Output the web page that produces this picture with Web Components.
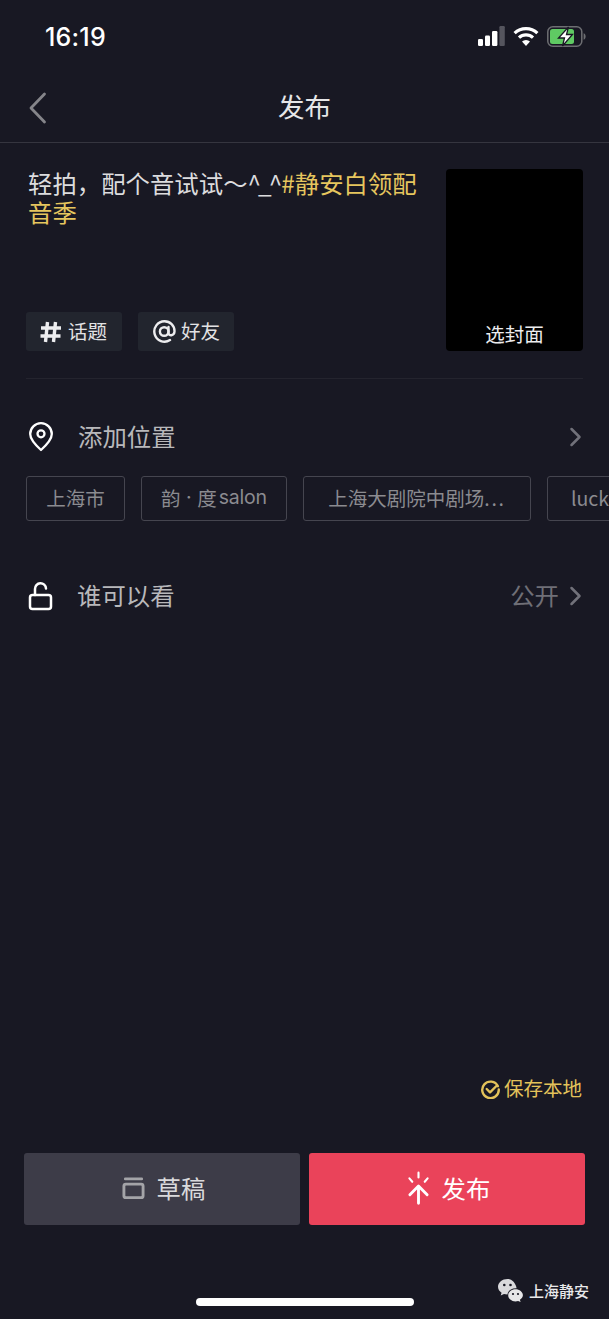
<!DOCTYPE html>
<html lang="zh-CN">
<head>
<meta charset="utf-8">
<title>发布</title>
<style>
html,body{margin:0;padding:0;background:#181823;}
body{font-family:"Noto Sans CJK SC","Noto Sans",sans-serif;color:#e0e0e2;}
</style>
</head>
<body>
<publish-screen></publish-screen>
<script>
const CJK='"Noto Sans CJK SC","Noto Sans",sans-serif';
function comp(name,css,html){
  customElements.define(name,class extends HTMLElement{
    constructor(){super();const r=this.attachShadow({mode:'open'});
      r.innerHTML=`<style>${css}</style>${html}`;}
  });
}
const chev=`<svg width="13" height="20" viewBox="0 0 13 20" fill="none" stroke="currentColor" stroke-width="2.500" stroke-linecap="round" stroke-linejoin="round"><path d="M2.500 2l8 8-8 8"/></svg>`;

comp('status-bar',`
:host{display:flex;align-items:center;justify-content:space-between;height:72px;padding:2px 23px 0 45px;box-sizing:border-box;flex:none}
.t{font:500 25px/1 Inter,sans-serif;color:#fff;letter-spacing:.2px}
.i{display:flex;align-items:center;gap:8px;position:relative;top:-1px}
svg{display:block}
`,`<span class="t">16:19</span><span class="i">
<svg width="27" height="20" viewBox="0 0 27 20"><rect x="0" y="13" width="5" height="7" rx="1.200" fill="#fff"/><rect x="7" y="9.500" width="5" height="10.500" rx="1.200" fill="#fff"/><rect x="14" y="5" width="5.400" height="15" rx="1.200" fill="#fff"/><rect x="21.400" y="0" width="5.400" height="20" rx="1.200" fill="#55555e"/></svg>
<svg width="26" height="20" viewBox="0 0 26 20" fill="none" stroke="#fff" stroke-width="3.200"><path d="M1.600 7.200a16.500 16.500 0 0 1 22.800 0"/><path d="M6 11.700a10.200 10.200 0 0 1 14 0"/><path d="M13 20l-4-4.400a5.600 5.600 0 0 1 8 0z" fill="#fff" stroke="none"/></svg>
<svg width="39" height="21" viewBox="0 0 39 21"><rect x=".8" y=".8" width="34" height="19.400" rx="5" fill="none" stroke="#6d6e72" stroke-width="1.500"/><rect x="3" y="3" width="24" height="15" rx="2.500" fill="#5fca63"/><path d="M36.600 7.200c1.500.5 2 1.800 2 3.300s-.5 2.800-2 3.300z" fill="#6d6e72"/><path d="M21.500 1L11.500 12h6l-2 8 10-11.500h-6z" fill="#fff" stroke="#181823" stroke-width="1.300"/></svg>
</span>`);

comp('nav-bar',`
:host{display:flex;align-items:center;justify-content:center;height:71px;flex:none;position:relative;box-sizing:border-box;border-bottom:1px solid #35353f;padding-bottom:1px}
button{all:unset;position:absolute;left:28px;top:20px;display:block;color:#85858a;line-height:0}
h1{margin:0;font:400 26.500px/1 ${CJK};color:#e6e6e8;position:relative}
`,`<button aria-label="返回"><svg width="19" height="32" viewBox="0 0 19 32" fill="none" stroke="currentColor" stroke-width="2.800" stroke-linecap="round" stroke-linejoin="round"><path d="M16.500 2L3 16l13.500 14"/></svg></button><h1><slot></slot></h1>`);

comp('tag-chip',`
:host{display:inline-flex;align-items:center;gap:6px;height:39px;width:96px;box-sizing:border-box;padding:0 0 2px 14px;background:#22252e;border-radius:3px;font:400 19.500px/1 ${CJK};color:#e2e2e4}
::slotted(svg){display:block;flex:none;position:relative;top:1px}
`,`<slot name="icon"></slot><slot></slot>`);

comp('cover-picker',`
:host{display:flex;align-items:flex-end;justify-content:center;width:137px;height:182px;flex:none;background:#000;border-radius:4px;box-sizing:border-box;padding-bottom:6px;font:400 19.500px/1.200 ${CJK};color:#ececee}
`,`<slot></slot>`);

comp('caption-text',`
:host{display:block;font:400 24.400px/29px ${CJK};color:#dcdcde;padding-left:2px;margin-top:-1px;white-space:nowrap}
.e{letter-spacing:-3px;margin-right:2px}
b{font-weight:400;color:#e6c65e}
`,`<span>轻拍，配个音试试～</span><span class="e">^_^</span><b>#静安白领配</b><br><b>音季</b>`);

comp('compose-box',`
:host{display:flex;justify-content:space-between;flex:none;margin:26px 26px 0 26px;padding-bottom:27px;border-bottom:1px solid #24242e}
.l{display:flex;flex-direction:column;justify-content:space-between;width:400px}
.tags{display:flex;gap:16px}
`,`<div class="l"><slot name="caption"></slot><div class="tags"><slot name="tags"></slot></div></div><slot name="cover"></slot>`);

comp('list-row',`
:host{display:flex;align-items:center;height:40px;flex:none;padding:0 27px 0 28px;font:400 24.400px/1 ${CJK};color:#b2b2b6}
.ic{width:var(--ic,50px);flex:none;line-height:0;color:#fff}
.lb{flex:1;color:#b8b8bb;position:relative;top:-1px}
.v{color:#6f6f77;display:flex;align-items:center;gap:10px}
.vt{position:relative;top:-1px}
.ch{color:#71717a;line-height:0}
`,`<span class="ic"><slot name="icon"></slot></span><span class="lb"><slot></slot></span><span class="v"><span class="vt"><slot name="value"></slot></span><span class="ch">${chev}</span></span>`);

comp('loc-chip',`
:host{display:flex;align-items:center;justify-content:center;flex:none;height:45px;box-sizing:border-box;border:1.500px solid #45454f;border-radius:3px;padding-bottom:2px;font:400 19.500px/1 ${CJK};color:#8b8b90;white-space:nowrap}
`,`<slot></slot>`);

comp('loc-chips',`
:host{display:flex;gap:16px;flex:none;overflow:hidden;padding-left:26px;margin-top:19px}
`,`<slot></slot>`);

comp('save-local',`
:host{display:flex;align-items:center;justify-content:flex-end;gap:4px;flex:none;height:24px;box-sizing:border-box;padding:0 27px 2px 0;font:400 19.500px/1 ${CJK};color:#e3c25a}
svg{display:block;position:relative;top:1px}
`,`<svg width="19" height="19" viewBox="0 0 20 20" fill="none" stroke="currentColor" stroke-width="2.500" stroke-linecap="round" stroke-linejoin="round"><path d="M17.800 6.500A8.700 8.700 0 1 0 18.700 10"/><path d="M6 9.500l3.500 3.500L17 5.500"/></svg><slot></slot>`);

comp('action-button',`
:host{display:flex;align-items:center;justify-content:center;gap:12px;width:276px;height:72px;box-sizing:border-box;padding:0 0 2px 3px;border-radius:3px;background:var(--bg,#3d3c48);font:400 24.400px/1 ${CJK};color:var(--fg,#dadadc)}
`,`<slot name="icon"></slot><slot></slot>`);

comp('home-indicator',`
:host{display:block;width:218px;height:8px;border-radius:4px;background:#fff;flex:none;margin:73px auto 13px}
`,``);

comp('wechat-mark',`
:host{position:absolute;right:20px;bottom:17px;display:flex;align-items:center;gap:6px;font:500 15px/1 ${CJK};color:#e9e9eb}
svg{display:block}
`,`<svg width="25" height="23" viewBox="0 0 25 23"><path d="M9.500 0C4.300 0 0 3.500 0 7.800c0 2.500 1.400 4.600 3.600 6L2.700 16.600l3.300-1.700c1 .3 2.100.5 3.500.5.300-3.500 3.700-6.200 8.300-6.200h.8C17.700 4 14 0 9.500 0z" fill="#d9d9dc"/><circle cx="6.300" cy="6" r="1.300" fill="#181823"/><circle cx="12.500" cy="6" r="1.300" fill="#181823"/><path d="M17.500 10.200c-4 0-7.300 2.700-7.300 6.100s3.300 6.100 7.300 6.100c.9 0 1.800-.1 2.600-.4l2.500 1-.7-2.300c1.700-1.100 3-2.700 3-4.400 0-3.400-3.400-6.100-7.400-6.100z" fill="#e6e6e8"/><circle cx="15" cy="15" r="1.100" fill="#181823"/><circle cx="20" cy="15" r="1.100" fill="#181823"/></svg><slot></slot>`);

comp('publish-screen',`
:host{display:flex;flex-direction:column;width:609px;height:1319px;overflow:hidden;position:relative;background:#181823}
.sp{flex:1}
.btns{display:flex;gap:9px;padding:0 24px;flex:none;margin-top:52px}
.dot{font-family:Inter,sans-serif}
.sl{font-family:Inter,sans-serif;margin-left:2px;letter-spacing:-.2px}
.dd{letter-spacing:1.800px}
`,`
<status-bar></status-bar>
<nav-bar>发布</nav-bar>
<compose-box>
  <caption-text slot="caption"></caption-text>
  <tag-chip slot="tags"><svg slot="icon" width="22" height="22" viewBox="0 0 22 22" fill="none" stroke="#ededef" stroke-width="3.400"><path d="M7.500 1L5.500 21M15.500 1l-2 20M1 7h20M.5 15h20"/></svg>话题</tag-chip>
  <tag-chip slot="tags" style="gap:5px;padding-left:15px"><svg slot="icon" width="23" height="23" viewBox="0 0 23 23" fill="none" stroke="#ededef" stroke-width="2.400" stroke-linecap="round"><circle cx="11.200" cy="11.500" r="4.300"/><path d="M15.500 7v6.200c0 3 5.800 3 6-1.700C21.700 5.500 17 1.300 11.500 1.300a10.200 10.200 0 1 0 5.500 18.800"/></svg>好友</tag-chip>
  <cover-picker slot="cover">选封面</cover-picker>
</compose-box>
<list-row style="margin-top:38px">
  <svg slot="icon" width="26" height="30" viewBox="0 0 26 30" fill="none" stroke="#fff" stroke-width="2.300" stroke-linejoin="round"><path d="M13 28C6.200 21.800 2.200 17 2.200 12a10.800 10.800 0 0 1 21.600 0c0 5-4 9.800-10.800 16z"/><circle cx="13" cy="11.800" r="3.500"/></svg>
  添加位置
</list-row>
<loc-chips>
  <loc-chip style="width:99px">上海市</loc-chip>
  <loc-chip style="width:146px">韵<span class="dot">&nbsp;·&nbsp;</span>度<span class="sl">salon</span></loc-chip>
  <loc-chip style="width:228px">上海大剧院中剧场<span class="dd">...</span></loc-chip>
  <loc-chip style="width:120px;justify-content:flex-start;padding-left:23px">lucky</loc-chip>
</loc-chips>
<list-row style="margin-top:55px;--ic:49px">
  <svg slot="icon" width="26" height="30" viewBox="0 0 26 30" fill="none" stroke="#fff" stroke-width="2.500" stroke-linecap="round" stroke-linejoin="round"><rect x="2" y="14" width="21" height="14" rx="2.500"/><path d="M7 14V8a5.500 5.500 0 0 1 11-.5"/></svg>
  谁可以看
  <span slot="value">公开</span>
</list-row>
<div class="sp"></div>
<save-local>保存本地</save-local>
<div class="btns">
  <action-button><svg slot="icon" width="23" height="24" viewBox="0 0 24 24" fill="none" stroke="#a4a4a8" stroke-width="3" stroke-linejoin="round" stroke-linecap="round"><path d="M3.500 2.500h17"/><rect x="2" y="8" width="20" height="14" rx="2"/></svg>草稿</action-button>
  <action-button style="--bg:#ea435a;--fg:#fff"><svg slot="icon" width="23" height="36" viewBox="0 0 24 36" fill="none" stroke="#fff" stroke-width="3" stroke-linecap="round" stroke-linejoin="round"><path d="M12 34V17M3 25l9-9 9 9"/><path d="M12 2v5M2.500 8l3 3.500M21.500 8l-3 3.500" stroke-width="2.200"/></svg>发布</action-button>
</div>
<home-indicator></home-indicator>
<wechat-mark>上海静安</wechat-mark>
`);
</script>
</body>
</html>
